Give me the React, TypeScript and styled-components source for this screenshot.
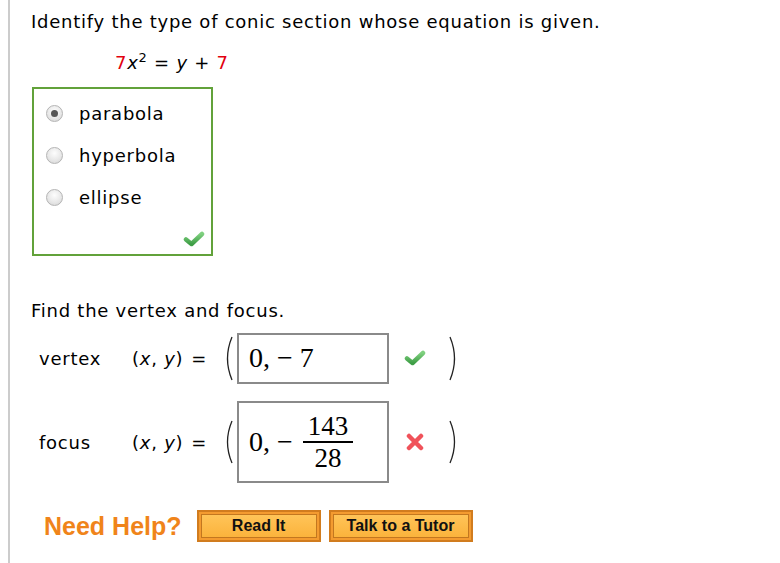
import React from 'react';
import styled, { createGlobalStyle } from 'styled-components';

const GlobalStyle = createGlobalStyle`
  html, body {
    margin: 0;
    padding: 0;
    background: #ffffff;
  }
  body {
    font-family: "DejaVu Sans", Verdana, sans-serif;
    color: #000;
  }
`;

// Page frame with the grey rule on the left
const Page = styled.div`
  margin-left: 8px;
  border-left: 2px solid #cccccc;
  min-height: 563px;
  padding: 9px 0 0 21px;
  box-sizing: border-box;
  font-size: 18px;
  letter-spacing: 0.75px;
`;

const Prompt = styled.div`
  line-height: 26px;
`;

const Equation = styled.div`
  margin: 15px 0 0 84px;
  line-height: 26px;
`;

const Red = styled.span`
  color: #e2000e;
`;

const Var = styled.i`
  font-style: italic;
`;

const Sup = styled.sup`
  font-size: 13px;
  vertical-align: 7px;
  line-height: 0;
`;

// Multiple choice box
const ChoiceBox = styled.div`
  margin: 11px 0 0 1px;
  width: 181px;
  height: 169px;
  border: 2px solid #62a23a;
  box-sizing: border-box;
  position: relative;
  padding-top: 3px;
`;

const ChoiceRow = styled.div`
  display: flex;
  align-items: center;
  height: 42px;
  padding-left: 12px;
`;

const Radio = styled.span<{ $checked?: boolean }>`
  width: 17px;
  height: 17px;
  border-radius: 50%;
  border: 1px solid #b4b4b4;
  box-sizing: border-box;
  background: radial-gradient(circle at 50% 35%, #fdfdfd 0%, #e6e6e6 60%, #d2d2d2 100%);
  display: flex;
  align-items: center;
  justify-content: center;
  margin-right: 16px;

  &::after {
    content: '';
    display: ${({ $checked }) => ($checked ? 'block' : 'none')};
    width: 7px;
    height: 7px;
    border-radius: 50%;
    background: #555555;
  }
`;

const BoxCheck = styled.span`
  position: absolute;
  right: 6px;
  bottom: 7px;
  line-height: 0;
`;

const SubPrompt = styled.div`
  margin-top: 42px;
  line-height: 26px;
`;

// Answer rows
const AnswerRow = styled.div<{ $height: number; $gap: number }>`
  display: flex;
  align-items: center;
  height: ${({ $height }) => $height}px;
  margin-top: ${({ $gap }) => $gap}px;
`;

const Label = styled.span`
  width: 101px;
  padding-left: 8px;
  box-sizing: border-box;
`;

const Pair = styled.span`
  width: 90px;
  white-space: nowrap;
`;

const Equals = styled.span`
  margin-left: 8px;
`;

const Paren = styled.span`
  line-height: 0;
  display: flex;
  align-items: center;
`;

const AnswerBox = styled.div<{ $height: number }>`
  width: 152px;
  height: ${({ $height }) => $height}px;
  border: 2px solid #8a8a8a;
  box-sizing: border-box;
  display: flex;
  align-items: center;
  padding-left: 10px;
  font-family: "Liberation Serif", "Times New Roman", serif;
  font-size: 28px;
  letter-spacing: 0;
  margin: 0 14px 0 3px;
`;

const MathText = styled.span`
  white-space: pre;
`;

const Fraction = styled.span`
  display: inline-flex;
  flex-direction: column;
  align-items: center;
  font-size: 27px;
  line-height: 24px;
  margin-left: 10px;
`;

const Numerator = styled.span`
  border-bottom: 2px solid #000;
  padding: 0 5px 3px;
`;

const Denominator = styled.span`
  padding-top: 3px;
`;

const Mark = styled.span`
  width: 24px;
  display: flex;
  justify-content: center;
  margin-right: 21px;
  line-height: 0;
`;

// Help bar
const HelpBar = styled.div`
  display: flex;
  align-items: center;
  margin-top: 26px;
  padding-left: 13px;
  letter-spacing: 0;
`;

const HelpTitle = styled.span`
  font-family: "Liberation Sans", Arial, sans-serif;
  font-weight: bold;
  font-size: 25px;
  color: #f0841a;
  margin-right: 15px;
`;

const HelpButton = styled.span<{ $width: number }>`
  width: ${({ $width }) => $width}px;
  height: 32px;
  box-sizing: border-box;
  border: 2px solid #d17c1e;
  background: #f49b30;
  padding: 2px;
  margin-right: 8px;
  display: flex;

  & > span {
    flex: 1;
    border: 1px solid #c3771f;
    background: linear-gradient(#ffc458, #fbb33c);
    display: flex;
    align-items: center;
    justify-content: center;
    font-family: "Liberation Sans", Arial, sans-serif;
    font-weight: bold;
    font-size: 16px;
    color: #111;
  }
`;

const CheckIcon = () => (
  <svg width="22" height="16" viewBox="0 0 22 16">
    <defs>
      <linearGradient id="chk" x1="0" y1="0" x2="0" y2="1">
        <stop offset="0" stopColor="#7fd07f" />
        <stop offset="1" stopColor="#3e9e46" />
      </linearGradient>
    </defs>
    <path d="M3 8.5 L8.5 13 L19 3" fill="none" stroke="url(#chk)" strokeWidth="4.5" strokeLinecap="round" strokeLinejoin="round" />
  </svg>
);

const CrossIcon = () => (
  <svg width="20" height="18" viewBox="0 0 20 18">
    <path d="M4 3 L16 15 M16 3 L4 15" stroke="#f0525a" strokeWidth="4.5" strokeLinecap="round" />
  </svg>
);

const BigParen = ({ side, height }: { side: 'left' | 'right'; height: number }) => (
  <svg width="12" height={height} viewBox={`0 0 12 ${height}`}>
    <path
      d={
        side === 'left'
          ? `M10 1 Q1 ${height / 2} 10 ${height - 1}`
          : `M2 1 Q11 ${height / 2} 2 ${height - 1}`
      }
      fill="none"
      stroke="#222"
      strokeWidth="1.3"
    />
  </svg>
);

const XY = () => (
  <Pair>
    (<Var>x</Var>, <Var>y</Var>)<Equals>=</Equals>
  </Pair>
);

export default function App() {
  return (
    <>
      <GlobalStyle />
      <Page>
        <Prompt>Identify the type of conic section whose equation is given.</Prompt>
        <Equation>
          <Red>7</Red>
          <Var>x</Var>
          <Sup>2</Sup> = <Var>y</Var> + <Red>7</Red>
        </Equation>

        <ChoiceBox>
          <ChoiceRow>
            <Radio $checked />
            parabola
          </ChoiceRow>
          <ChoiceRow>
            <Radio />
            hyperbola
          </ChoiceRow>
          <ChoiceRow>
            <Radio />
            ellipse
          </ChoiceRow>
          <BoxCheck>
            <CheckIcon />
          </BoxCheck>
        </ChoiceBox>

        <SubPrompt>Find the vertex and focus.</SubPrompt>

        <AnswerRow $height={56} $gap={6}>
          <Label>vertex</Label>
          <XY />
          <Paren>
            <BigParen side="left" height={45} />
          </Paren>
          <AnswerBox $height={51}>
            <MathText>0, − 7</MathText>
          </AnswerBox>
          <Mark>
            <CheckIcon />
          </Mark>
          <Paren>
            <BigParen side="right" height={45} />
          </Paren>
        </AnswerRow>

        <AnswerRow $height={84} $gap={14}>
          <Label>focus</Label>
          <XY />
          <Paren>
            <BigParen side="left" height={44} />
          </Paren>
          <AnswerBox $height={82}>
            <MathText>0, −</MathText>
            <Fraction>
              <Numerator>143</Numerator>
              <Denominator>28</Denominator>
            </Fraction>
          </AnswerBox>
          <Mark>
            <CrossIcon />
          </Mark>
          <Paren>
            <BigParen side="right" height={44} />
          </Paren>
        </AnswerRow>

        <HelpBar>
          <HelpTitle>Need Help?</HelpTitle>
          <HelpButton $width={124}>
            <span>Read It</span>
          </HelpButton>
          <HelpButton $width={144}>
            <span>Talk to a Tutor</span>
          </HelpButton>
        </HelpBar>
      </Page>
    </>
  );
}
